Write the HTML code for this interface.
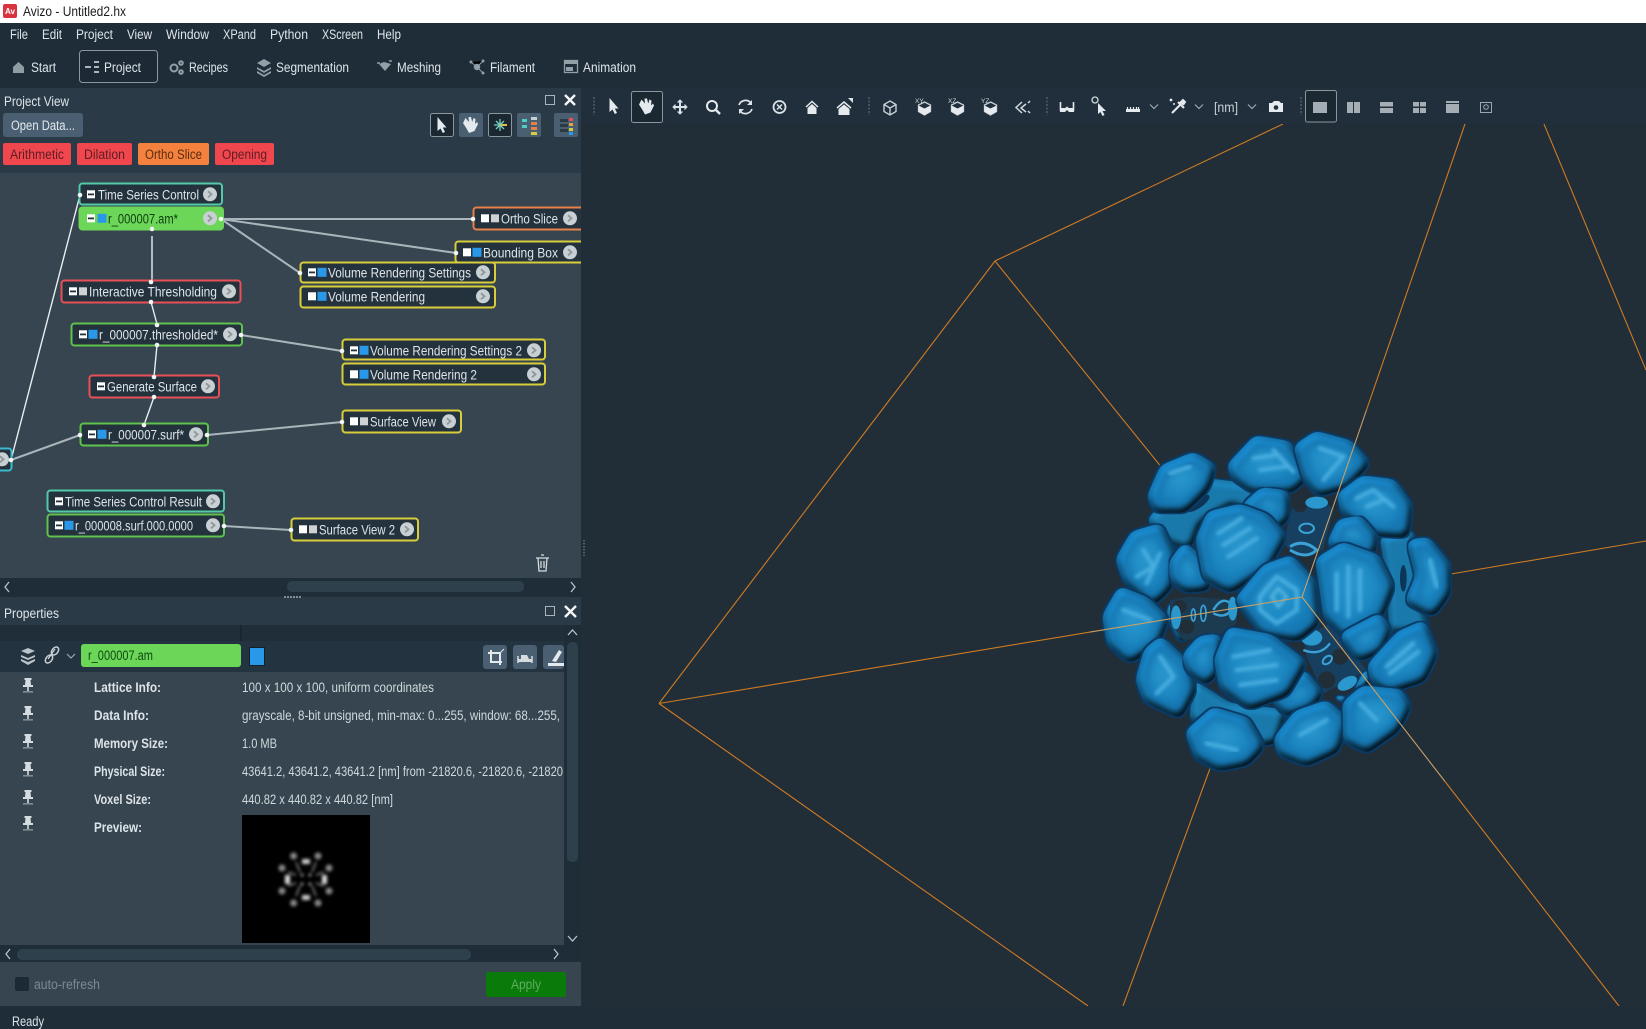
<!DOCTYPE html>
<html lang="en">
<head>
<meta charset="utf-8">
<title>Avizo - Untitled2.hx</title>
<style>
html,body{margin:0;padding:0;background:#212e38;width:1646px;height:1029px;overflow:hidden}
svg{display:block;filter:blur(.35px)}
text{font-family:"Liberation Sans",sans-serif;font-size:13.5px;fill:#dde4e9}
.b{font-weight:bold}
path[fill="url(#lg)"]{stroke:#1a90d7;stroke-width:34;stroke-linejoin:round}
.hl path{fill:none;stroke:#4aaee0;stroke-width:12;stroke-linecap:round}
</style>
</head>
<body>
<svg xmlns="http://www.w3.org/2000/svg" width="1646" height="1029" viewBox="0 0 1646 1029">
<defs>
<clipPath id="vc"><rect x="582" y="124" width="1064" height="882"/></clipPath>
<clipPath id="gc"><rect x="0" y="173" width="581" height="405"/></clipPath>
<clipPath id="pc"><rect x="0" y="640" width="564" height="305"/></clipPath>
<radialGradient id="lg" cx="48%" cy="42%" r="62%">
<stop offset="0" stop-color="#33b8fa"/><stop offset=".65" stop-color="#20a3eb"/><stop offset="1" stop-color="#168ad3"/>
</radialGradient>
<filter id="goo" x="-20%" y="-20%" width="140%" height="140%" color-interpolation-filters="sRGB">
<feGaussianBlur in="SourceGraphic" stdDeviation="12" result="b"/>
<feColorMatrix in="b" type="matrix" values="1 0 0 0 0 0 1 0 0 0 0 0 1 0 0 0 0 0 12 -5" result="g"/>
<feMorphology in="g" operator="dilate" radius="4" result="d"/>
<feFlood flood-color="#0a3a66"/>
<feComposite in2="d" operator="in" result="o"/>
<feGaussianBlur in="g" stdDeviation="11" result="h"/>
<feDiffuseLighting in="h" surfaceScale="16" diffuseConstant=".95" lighting-color="#fff" result="L"><feDistantLight azimuth="240" elevation="60"/></feDiffuseLighting>
<feComposite in="g" in2="L" operator="arithmetic" k1="1" k2="0" k3="0" k4="0" result="s"/>
<feMerge><feMergeNode in="o"/><feMergeNode in="s"/></feMerge>
</filter>
<filter id="bl" x="-30%" y="-30%" width="160%" height="160%"><feGaussianBlur stdDeviation="5"/></filter>
<filter id="bs"><feGaussianBlur stdDeviation="1.5"/></filter>
<g id="ar"><circle r="7" fill="#c9d0d3"/><path d="M-2 -3L1.5 0L-2 3" fill="none" stroke="#8d969b" stroke-width="1.8"/></g>
<g id="mn"><rect x="-4" y="-4" width="8" height="8" fill="#fff"/><rect x="-3" y="-.8" width="6" height="1.8" fill="#24323d"/></g>
<g id="wh"><rect x="-4" y="-4" width="8" height="8" fill="#fff"/></g>
<g id="gy"><rect x="-4" y="-4" width="8" height="8" fill="#cfd2d3"/></g>
<g id="bu"><rect x="-4.5" y="-4.5" width="9" height="9" fill="#2a98e8"/></g>
<g id="pin" fill="#d5dce0"><rect x="-3.5" y="-8" width="7" height="2"/><path d="M-2.5 -6H2.5L3 -1H-3Z"/><rect x="-5" y="-1" width="10" height="2"/><rect x="-.8" y="1" width="1.6" height="4"/><rect x="-5" y="5" width="10" height="1.6" fill="#7f8c95"/></g>
<path id="cur" d="M-4.5 -8V6L-1.5 3.5L.8 8L3 7L.8 2.5H4.5Z" fill="#e4eaee"/>
<path id="hand" d="M-7 -2L-4.500 -7L-1 -3L-1.500 -8L1 -8L2.200 -3L3.500 -7L5.500 -6L5 -1L7 -3L8 -1L4.500 6L-1 8L-3.500 3.500Z" fill="#e4eaee"/>
<g id="cube" fill="none" stroke="#c6d0d6" stroke-width="1.4"><path d="M0 -7L6 -3.500V3.500L0 7L-6 3.500V-3.500Z"/><path d="M0 0V7M0 0L6 -3.500M0 0L-6 -3.500"/></g>
<g id="cube2"><path d="M0 -6L6 -3V3.500L0 7L-6 3.500V-3Z" fill="none" stroke="#c6d0d6" stroke-width="1.3"/><path d="M0 .5L-6 -2.500V3.500L0 7L6 3.500V-2.500Z" fill="#e4eaee"/></g>
<path id="chev" d="M-4 -2L0 2L4 -2" fill="none" stroke="#9aa7b0" stroke-width="1.2"/>
</defs>

<!-- window title bar -->
<rect width="1646" height="23" fill="#fff"/>
<rect x="3" y="4" width="14" height="14" rx="2" fill="#d8333f"/>
<text x="5" y="14" style="font-size:8px;fill:#fff;font-weight:bold" textLength="10" lengthAdjust="spacingAndGlyphs">Av</text>
<text x="23" y="16" style="fill:#1c1c1c" textLength="103" lengthAdjust="spacingAndGlyphs">Avizo - Untitled2.hx</text>

<!-- menu + toolbar -->
<rect y="23" width="1646" height="65" fill="#1f2d39"/>
<g>
<text x="10" y="39" textLength="18" lengthAdjust="spacingAndGlyphs">File</text>
<text x="42" y="39" textLength="20" lengthAdjust="spacingAndGlyphs">Edit</text>
<text x="76" y="39" textLength="37" lengthAdjust="spacingAndGlyphs">Project</text>
<text x="127" y="39" textLength="25" lengthAdjust="spacingAndGlyphs">View</text>
<text x="166" y="39" textLength="43" lengthAdjust="spacingAndGlyphs">Window</text>
<text x="223" y="39" textLength="33" lengthAdjust="spacingAndGlyphs">XPand</text>
<text x="270" y="39" textLength="38" lengthAdjust="spacingAndGlyphs">Python</text>
<text x="322" y="39" textLength="41" lengthAdjust="spacingAndGlyphs">XScreen</text>
<text x="377" y="39" textLength="24" lengthAdjust="spacingAndGlyphs">Help</text>
</g>
<g>
<path d="M13 67L18.500 62L24 67V73H13Z" fill="#8f9ca4"/>
<text x="31" y="72" textLength="25" lengthAdjust="spacingAndGlyphs">Start</text>
<rect x="79.500" y="50.500" width="78" height="32" rx="3" fill="#1d2a35" stroke="#8b969d"/>
<path d="M85 67H91M94 62H99M94 67H99M94 72H99" stroke="#dfe5e9" stroke-width="1.6" fill="none"/>
<text x="104" y="72" textLength="37" lengthAdjust="spacingAndGlyphs">Project</text>
<g fill="none" stroke="#939fa7" stroke-width="2"><circle cx="174" cy="68" r="3.500"/><circle cx="181" cy="63" r="1.800"/><circle cx="181" cy="72" r="1.800"/></g>
<text x="189" y="72" textLength="39" lengthAdjust="spacingAndGlyphs">Recipes</text>
<path d="M257 63L264 59L271 63L264 67ZM257 67L264 71L271 67V69L264 73L257 69ZM257 71L264 75L271 71V73L264 77L257 73Z" fill="#939fa7"/>
<text x="276" y="72" textLength="73" lengthAdjust="spacingAndGlyphs">Segmentation</text>
<path d="M379 64L384 62L391 64L385 71Z" fill="#939fa7"/><path d="M377 63H380M389 61H392" stroke="#939fa7" stroke-width="1.5"/>
<text x="397" y="72" textLength="44" lengthAdjust="spacingAndGlyphs">Meshing</text>
<path d="M471 62L477 67L483 61M477 67L483 73" stroke="#939fa7"/>
<g fill="#939fa7"><circle cx="477" cy="67" r="3.200"/><circle cx="471" cy="62" r="1.500"/><circle cx="483" cy="61" r="1.500"/><circle cx="483" cy="73" r="1.500"/></g>
<text x="490" y="72" textLength="45" lengthAdjust="spacingAndGlyphs">Filament</text>
<rect x="564.500" y="60.500" width="13" height="12" fill="none" stroke="#939fa7" stroke-width="1.3"/><rect x="564" y="60" width="14" height="4" fill="#939fa7"/><rect x="566" y="67" width="7" height="4" fill="#939fa7"/>
<text x="583" y="72" textLength="53" lengthAdjust="spacingAndGlyphs">Animation</text>
</g>

<!-- viewer -->
<rect x="581" y="88" width="1065" height="37" fill="#212f3c"/>
<rect x="581" y="124" width="1065" height="882" fill="#212e38"/>
<g clip-path="url(#vc)" stroke="#cf7a22" stroke-width="1.1" fill="none">
<path d="M995 261L1283 124M995 261L659 703.500M995 261L1200 515M659 703.500L1088 1006M1212 763L1123 1006M1451 574L1646 541M1544 124L1646 370"/>
</g>

<!-- 3D surface -->
<g transform="translate(1090 410) scale(.33333)">
<g filter="url(#goo)" fill="#1f93d0">
<path d="M170 330L300 200L470 220L600 240L560 360L430 280L330 340L300 420L240 400Z"/>
<path d="M870 380L970 360L1000 600L1020 660L900 670L890 500Z"/>
<path d="M230 620L270 700L300 680L240 560Z"/>
<path d="M310 810L420 880L590 900L560 1000L480 1010L300 930Z"/>
<path d="M700 850L780 860L830 770L850 810L760 880Z"/>
</g>
<g fill="#212e38">
<ellipse cx="325" cy="280" rx="40" ry="14" transform="rotate(-35 325 280)" fill="#0c3558"/>
<ellipse cx="940" cy="505" rx="10" ry="40" fill="#0c3558"/>
<ellipse cx="420" cy="930" rx="40" ry="14" transform="rotate(15 420 930)" fill="#0c3558"/>
<path d="M610 280L700 270L730 300L700 420L620 440L580 400Z" fill="#163f60"/>
<path d="M240 570L300 560L440 570L440 640L380 680L280 690L240 640Z" fill="#1c3b50"/>
<path d="M640 680L720 640L830 780L700 850L650 740Z" fill="#163f60"/>
<circle cx="270" cy="590" r="20"/><circle cx="290" cy="650" r="22"/><circle cx="630" cy="285" r="22"/><circle cx="750" cy="740" r="24"/><circle cx="710" cy="810" r="26"/>
</g>
<g fill="none" stroke="#3aa2d6" stroke-width="9">
<ellipse cx="680" cy="278" rx="34" ry="18" fill="#2a97cd" stroke="none"/>
<path d="M600 410Q640 385 680 420Q650 450 600 420"/><ellipse cx="650" cy="355" rx="22" ry="14" stroke-width="6"/>
<ellipse cx="258" cy="622" rx="15" ry="36" fill="#2a97cd" stroke="none"/>
<ellipse cx="340" cy="610" rx="8" ry="24" stroke-width="5"/><ellipse cx="310" cy="615" rx="6" ry="18" stroke-width="5"/>
<path d="M370 600Q400 550 430 590Q410 630 370 610" stroke-width="7"/><ellipse cx="428" cy="596" rx="14" ry="36" fill="#2a97cd" stroke="none"/>
<ellipse cx="665" cy="683" rx="32" ry="24" fill="#2a97cd" stroke="none"/>
<path d="M640 720Q690 740 720 700" stroke-width="7"/><ellipse cx="712" cy="750" rx="16" ry="10" stroke-width="6" transform="rotate(-40 712 750)"/>
<ellipse cx="772" cy="820" rx="32" ry="18" transform="rotate(-30 772 820)" fill="#2a97cd" stroke="none"/>
</g>
<!-- lobes -->
<g filter="url(#goo)"><path fill="url(#lg)" d="M430 170L500 95L590 110L635 200L600 230L490 230L440 195Z"/></g>
<g class="hl" filter="url(#bl)"><path d="M490 145L560 135M510 180L590 170M550 120L610 185"/></g>
<g filter="url(#goo)"><path fill="url(#lg)" d="M630 115L680 82L775 108L820 160L760 220L690 240L655 200Z"/></g>
<g class="hl" filter="url(#bl)"><path d="M690 115L760 140L700 210"/></g>
<g filter="url(#goo)"><path fill="url(#lg)" d="M190 260L225 180L310 145L360 175L340 230L280 290L205 290Z"/></g>
<g class="hl" filter="url(#bl)"><path d="M240 190L300 170"/></g>
<g filter="url(#goo)"><path fill="url(#lg)" d="M475 290L520 250L580 258L580 320L555 340L505 300Z"/></g>
<g filter="url(#goo)"><path fill="url(#lg)" d="M95 450L135 380L205 360L240 440L230 525L190 565L115 505Z"/></g>
<g class="hl" filter="url(#bl)"><path d="M160 420L190 470L140 500M210 430L170 520"/></g>
<g filter="url(#goo)"><path fill="url(#lg)" d="M255 460L285 420L325 455L345 525L290 530L258 505Z"/></g>
<g filter="url(#goo)"><path fill="url(#lg)" d="M335 390L365 320L450 300L525 328L570 380L525 462L420 530L355 495Z"/></g>
<g class="hl" filter="url(#bl)"><path d="M385 370L455 325M400 405L480 355M415 440L500 385"/></g>
<g filter="url(#goo)"><path fill="url(#lg)" d="M760 260L820 215L905 225L950 290L940 365L860 360L768 298Z"/></g>
<g class="hl" filter="url(#bl)"><path d="M800 265L850 240L910 290M830 290L880 270"/></g>
<g filter="url(#goo)"><path fill="url(#lg)" d="M730 400L755 345L805 335L845 380L840 420L770 400Z"/></g>
<g filter="url(#goo)"><path fill="url(#lg)" d="M970 405L1010 400L1065 470L1065 545L1025 600L965 570L995 500Z"/></g>
<g class="hl" filter="url(#bl)"><path d="M1020 450L1040 530"/></g>
<g filter="url(#goo)"><path fill="url(#lg)" d="M695 455L760 415L855 450L895 530L862 612L770 665L718 615Z"/></g>
<g class="hl" filter="url(#bl)"><path d="M740 490V600M775 470V620M810 480V600"/></g>
<g filter="url(#goo)"><path fill="url(#lg)" d="M770 680L865 630L885 660L862 712L810 735Z"/></g>
<g filter="url(#goo)"><path fill="url(#lg)" d="M455 570L530 480L600 455L660 520L670 635L620 675L525 660Z"/></g>
<g class="hl" filter="url(#bl)"><path d="M510 560L560 500L620 540L620 600L560 640L510 600Z"/><path d="M545 560L565 535L590 560L565 590Z" style="stroke-width:8;stroke:#5ab8e2"/></g>
<g filter="url(#goo)"><path fill="url(#lg)" d="M55 620L95 550L165 578L218 630L192 692L120 740L68 695Z"/></g>
<g class="hl" filter="url(#bl)"><path d="M100 600L180 630"/></g>
<g filter="url(#goo)"><path fill="url(#lg)" d="M850 770L932 680L995 652L1025 730L992 800L900 830L858 805Z"/></g>
<g class="hl" filter="url(#bl)"><path d="M890 770L970 700M900 790L985 725"/></g>
<g filter="url(#goo)"><path fill="url(#lg)" d="M155 810L178 728L212 700L282 765L300 838L265 905L175 862Z"/></g>
<g class="hl" filter="url(#bl)"><path d="M210 740L250 800L200 850"/></g>
<g filter="url(#goo)"><path fill="url(#lg)" d="M295 740L335 695L378 690L372 775L348 805L305 775Z"/></g>
<g filter="url(#goo)"><path fill="url(#lg)" d="M565 868L640 800L680 850L655 880L592 900Z"/></g>
<g filter="url(#goo)"><path fill="url(#lg)" d="M390 750L425 670L538 690L630 760L582 842L480 880L405 825Z"/></g>
<g class="hl" filter="url(#bl)"><path d="M430 740L540 720M440 780L560 765M450 825L560 810"/></g>
<g filter="url(#goo)"><path fill="url(#lg)" d="M570 988L625 918L708 890L755 932L732 1012L650 1050L578 1022Z"/></g>
<g class="hl" filter="url(#bl)"><path d="M630 975L710 930"/></g>
<g filter="url(#goo)"><path fill="url(#lg)" d="M775 885L822 845L925 855L945 890L912 952L830 1010L778 985Z"/></g>
<g class="hl" filter="url(#bl)"><path d="M810 880L860 930"/></g>
<g filter="url(#goo)"><path fill="url(#lg)" d="M305 970L372 910L465 938L505 1008L465 1050L390 1065L328 1032Z"/></g>
<g class="hl" filter="url(#bl)"><path d="M350 1000L440 1020"/></g>
</g>
<!-- wireframe passing in front of the surface -->
<g clip-path="url(#vc)" fill="none" stroke-width="1.1">
<path d="M659 703.500L1090 632.100M1366.500 410L1465 124M1445 781.500L1619 1006" stroke="#cf7a22"/>
<path d="M1090 632.100L1302 597L1366.500 410M1302 597L1445 781.500" stroke="#c9a066"/>
</g>

<!-- viewer toolbar icons -->
<g>
<path d="M594 97V115M869 97V115M1047 97V115M1301 97V115" stroke="#66747e" stroke-dasharray="2 1.5"/>
<use href="#cur" x="614" y="106"/>
<rect x="631.500" y="91.500" width="31" height="31" rx="2" fill="#1b2832" stroke="#8b969d"/>
<use href="#hand" x="646" y="106.500"/>
<path d="M680 101V113M674 107H686" stroke="#dce3e8" stroke-width="2"/><path d="M677.500 102.500L680 100L682.500 102.500M677.500 111.500L680 114L682.500 111.500M675.500 104.500L673 107L675.500 109.500M684.500 104.500L687 107L684.500 109.500" fill="#dce3e8" stroke="#dce3e8"/>
<circle cx="712" cy="106" r="5" fill="none" stroke="#e4eaee" stroke-width="2"/><path d="M716 110L720 114" stroke="#e4eaee" stroke-width="2.4"/>
<path d="M739 105A7 7 0 0 1 751 103M752 109A7 7 0 0 1 740 111" fill="none" stroke="#dce3e8" stroke-width="1.7"/><path d="M752 100V105H747M739 114V109H744" fill="#dce3e8"/>
<circle cx="779.500" cy="107" r="6" fill="none" stroke="#dce3e8" stroke-width="1.8"/><path d="M777 104.500L782 109.500M782 104.500L777 109.500" stroke="#dce3e8" stroke-width="1.5"/>
<path d="M806 107L812 101.500L818 107" fill="none" stroke="#e4eaee" stroke-width="1.5"/><path d="M807.500 108L812 104L816.500 108V114H807.500Z" fill="#e4eaee"/>
<path d="M837 108L844 102L851 108" fill="none" stroke="#e4eaee" stroke-width="1.5"/><path d="M838.500 109L844 104.500L849.500 109V115H838.500Z" fill="#e4eaee"/><path d="M848 98H853V103Z" fill="#dce3e8"/>
<use href="#cube" x="890" y="108"/>
<use href="#cube2" x="924.500" y="108"/><text x="915" y="103" style="font-size:6.5px;fill:#cfd8dd">XY</text>
<use href="#cube2" x="957.500" y="108"/><text x="948" y="103" style="font-size:6.5px;fill:#cfd8dd">XZ</text>
<use href="#cube2" x="990.500" y="108"/><text x="981" y="103" style="font-size:6.5px;fill:#cfd8dd">YZ</text>
<path d="M1022 102L1016 107.500L1022 113M1026 104L1021 108L1026 112M1030 101L1028 103M1030 113L1028 111" fill="none" stroke="#cfd8dd" stroke-width="1.5"/>
<path d="M1060.500 102V110H1064L1067 107.500L1070 110H1073.500V102" fill="none" stroke="#e4eaee" stroke-width="1.6"/><path d="M1060 108H1074V112H1069L1067 110L1065 112H1060Z" fill="#e4eaee"/>
<circle cx="1095" cy="100" r="3" fill="none" stroke="#cfd8dd" stroke-width="1.3"/><path d="M1098 103V114L1100.500 112L1102.500 116L1104.500 115L1102.500 111H1106Z" fill="#e4eaee"/>
<rect x="1126" y="109" width="14" height="3" fill="#e4eaee"/><path d="M1127.500 107V109M1130.500 107V109M1133.500 107V109M1136.500 107V109M1138.500 107V109" stroke="#e4eaee" stroke-width="1.2"/>
<use href="#chev" x="1154" y="106.500"/>
<path d="M1172 113L1180 105" stroke="#e4eaee" stroke-width="2"/><path d="M1178 102L1184 108M1180 103L1183 100L1185 102L1183 105" stroke="#e4eaee" stroke-width="2" fill="#e4eaee"/><circle cx="1171" cy="100" r="1.4" fill="#e4eaee"/><circle cx="1174" cy="104" r="1" fill="#e4eaee"/>
<use href="#chev" x="1199" y="106.500"/>
<text x="1214" y="112" style="fill:#c6d0d6" textLength="24" lengthAdjust="spacingAndGlyphs">[nm]</text>
<use href="#chev" x="1252" y="106.500"/>
<path d="M1269 103H1272L1274 101H1279L1281 103H1283V112H1269Z" fill="#e4eaee"/><circle cx="1276" cy="107.500" r="2.300" fill="#212f3c"/>
<rect x="1305.500" y="90.500" width="31" height="31.500" rx="2" fill="#1b2832" stroke="#8b969d"/>
<rect x="1313" y="102" width="14" height="11" fill="#a5aeb4"/>
<rect x="1347" y="102" width="6" height="11" fill="#a5aeb4"/><rect x="1354" y="102" width="6" height="11" fill="#a5aeb4"/>
<rect x="1380" y="102" width="13" height="4.500" fill="#a5aeb4"/><rect x="1380" y="108" width="13" height="5" fill="#a5aeb4"/>
<rect x="1413" y="102" width="6" height="4.500" fill="#a5aeb4"/><rect x="1420" y="102" width="6" height="4.500" fill="#a5aeb4"/><rect x="1413" y="108" width="6" height="5" fill="#a5aeb4"/><rect x="1420" y="108" width="6" height="5" fill="#a5aeb4"/>
<rect x="1446" y="101" width="13" height="2" fill="#a5aeb4"/><rect x="1446" y="104" width="13" height="9" fill="#a5aeb4"/>
<rect x="1480.500" y="102.500" width="11" height="10" fill="none" stroke="#9aa7b0"/><circle cx="1486" cy="107" r="2.300" fill="none" stroke="#9aa7b0"/>
</g>
<path d="M584 540V556" stroke="#66747e" stroke-width="1.5" stroke-dasharray="1.5 1.5"/>

<!-- left column -->
<rect x="0" y="88" width="581" height="918" fill="#2a3a47"/>
<text x="4" y="106" textLength="65" lengthAdjust="spacingAndGlyphs">Project View</text>
<rect x="545.500" y="95.500" width="9" height="9" fill="none" stroke="#aab4ba"/>
<path d="M565 95L575 105M575 95L565 105" stroke="#f4f6f7" stroke-width="2.4"/>
<rect x="3" y="113" width="80" height="24" rx="3" fill="#4a6072"/>
<text x="11" y="130" style="fill:#e3e9ec" textLength="64" lengthAdjust="spacingAndGlyphs">Open Data...</text>
<rect x="430.500" y="113.500" width="23" height="23" rx="2" fill="#1b2832" stroke="#8b969d"/>
<use href="#cur" x="442" y="125"/>
<rect x="459" y="113" width="24" height="24" rx="2" fill="#4a6072"/>
<use href="#hand" x="470" y="125"/>
<rect x="488.500" y="113.500" width="23" height="23" rx="2" fill="#1b2832" stroke="#8b969d"/>
<path d="M494 125H506M500 119V131M496 121L504 129M504 121L496 129" stroke="#76d0c0" stroke-width="1.3"/><path d="M501 125H507" stroke="#e0c040" stroke-width="2"/>
<rect x="517" y="113" width="24" height="24" rx="2" fill="#4a6072"/>
<rect x="522" y="119" width="5" height="3" fill="#4dd0c0"/><rect x="522" y="125" width="5" height="3" fill="#4dd0c0"/><rect x="531" y="117" width="6" height="3" fill="#c8d0d5"/><rect x="531" y="122" width="6" height="3" fill="#e8804a"/><rect x="531" y="127" width="6" height="3" fill="#e8804a"/><rect x="531" y="132" width="6" height="3" fill="#d8cd3a"/>
<rect x="554" y="113" width="24" height="24" rx="2" fill="#4a6072"/>
<rect x="560" y="119" width="8" height="3" fill="#2a3a47"/><rect x="560" y="124" width="8" height="3" fill="#2a3a47"/><rect x="560" y="129" width="8" height="3" fill="#2a3a47"/><rect x="569" y="118" width="4" height="3" fill="#e85058"/><rect x="569" y="123" width="4" height="3" fill="#e8a040"/><rect x="569" y="128" width="4" height="3" fill="#d8cd3a"/><rect x="569" y="132" width="4" height="3" fill="#2a98e8"/>

<rect x="3" y="143" width="68" height="22" rx="2" fill="#f0474f"/>
<text x="10" y="159" style="fill:#5f1c22" textLength="54" lengthAdjust="spacingAndGlyphs">Arithmetic</text>
<rect x="77" y="143" width="55" height="22" rx="2" fill="#f0474f"/>
<text x="84" y="159" style="fill:#5f1c22" textLength="41" lengthAdjust="spacingAndGlyphs">Dilation</text>
<rect x="138" y="143" width="71" height="22" rx="2" fill="#f4813e"/>
<text x="145" y="159" style="fill:#5a2c10" textLength="57" lengthAdjust="spacingAndGlyphs">Ortho Slice</text>
<rect x="215" y="143" width="59" height="22" rx="2" fill="#f0474f"/>
<text x="222" y="159" style="fill:#5f1c22" textLength="45" lengthAdjust="spacingAndGlyphs">Opening</text>

<!-- project graph -->
<rect x="0" y="173" width="581" height="405" fill="#36454f"/>
<g clip-path="url(#gc)">
<g stroke="#a9b5bb" stroke-width="2" fill="none">
<path d="M11 460L80 435M221 219H473M221 219L456 253M221 219L300 273M241 335L342 351M207 435L342 422M224 526L291 530"/>
</g>
<g stroke="#e8eef1" stroke-width="1.4" fill="none">
<path d="M11 460L80 195M152 236V283M151 302L157 324M157 345L154 377M154 397L144 425"/>
</g>
<g fill="#24323d" stroke-width="2" transform="translate(-.5 -.5)">
<rect x="-20" y="449" width="32" height="22" rx="3" stroke="#3ab9cf"/>
<rect x="80" y="184" width="142.500" height="21" rx="3" stroke="#52c9a8"/>
<rect x="80" y="208" width="143.500" height="22" rx="3" stroke="#6cd658" fill="#6cd658"/>
<rect x="474" y="208" width="130" height="22" rx="3" stroke="#e8804a"/>
<rect x="456" y="242" width="140" height="21" rx="3" stroke="#d8cd3a"/>
<rect x="301" y="263" width="194.500" height="20" rx="3" stroke="#d8cd3a"/>
<rect x="301" y="287" width="194.500" height="21" rx="3" stroke="#d8cd3a"/>
<rect x="62" y="281" width="179" height="22" rx="3" stroke="#e85058"/>
<rect x="72" y="324" width="170.500" height="22" rx="3" stroke="#5fc24d"/>
<rect x="343" y="340" width="202.500" height="20" rx="3" stroke="#d8cd3a"/>
<rect x="343" y="364" width="202.500" height="21" rx="3" stroke="#d8cd3a"/>
<rect x="90" y="376" width="129.500" height="22" rx="3" stroke="#e85058"/>
<rect x="81" y="424" width="127.500" height="22" rx="3" stroke="#5fc24d"/>
<rect x="343" y="411" width="118.500" height="22" rx="3" stroke="#d8cd3a"/>
<rect x="48" y="491" width="176.500" height="21" rx="3" stroke="#52c9a8"/>
<rect x="48" y="515" width="176.500" height="22" rx="3" stroke="#5fc24d"/>
<rect x="292" y="519" width="126.500" height="22" rx="3" stroke="#d8cd3a"/>
</g>
<g transform="translate(0 -.7)">
<use href="#ar" x="2" y="460"/>
<use href="#mn" x="91" y="195"/><text x="98" y="200" textLength="101" lengthAdjust="spacingAndGlyphs">Time Series Control</text><use href="#ar" x="210" y="195"/>
<use href="#mn" x="91" y="219"/><use href="#bu" x="102" y="219"/><text x="108" y="224" style="fill:#0f3d10" textLength="70" lengthAdjust="spacingAndGlyphs">r_000007.am*</text><use href="#ar" x="210" y="219"/>
<use href="#wh" x="485" y="219"/><use href="#gy" x="495" y="219"/><text x="501" y="224" textLength="57" lengthAdjust="spacingAndGlyphs">Ortho Slice</text><use href="#ar" x="570" y="219"/>
<use href="#wh" x="467" y="253"/><use href="#bu" x="477" y="253"/><text x="483" y="258" textLength="75" lengthAdjust="spacingAndGlyphs">Bounding Box</text><use href="#ar" x="570" y="253"/>
<use href="#mn" x="312" y="273"/><use href="#bu" x="322" y="273"/><text x="328" y="278" textLength="143" lengthAdjust="spacingAndGlyphs">Volume Rendering Settings</text><use href="#ar" x="483" y="273"/>
<use href="#wh" x="312" y="297"/><use href="#bu" x="322" y="297"/><text x="328" y="302" textLength="97" lengthAdjust="spacingAndGlyphs">Volume Rendering</text><use href="#ar" x="483" y="297"/>
<use href="#mn" x="73" y="292"/><use href="#gy" x="83" y="292"/><text x="89" y="297" textLength="128" lengthAdjust="spacingAndGlyphs">Interactive Thresholding</text><use href="#ar" x="229" y="292"/>
<use href="#mn" x="83" y="335"/><use href="#bu" x="93" y="335"/><text x="99" y="340" textLength="119" lengthAdjust="spacingAndGlyphs">r_000007.thresholded*</text><use href="#ar" x="230" y="335"/>
<use href="#mn" x="354" y="351"/><use href="#bu" x="364" y="351"/><text x="370" y="356" textLength="152" lengthAdjust="spacingAndGlyphs">Volume Rendering Settings 2</text><use href="#ar" x="534" y="351"/>
<use href="#wh" x="354" y="375"/><use href="#bu" x="364" y="375"/><text x="370" y="380" textLength="107" lengthAdjust="spacingAndGlyphs">Volume Rendering 2</text><use href="#ar" x="534" y="375"/>
<use href="#mn" x="101" y="387"/><text x="107" y="392" textLength="90" lengthAdjust="spacingAndGlyphs">Generate Surface</text><use href="#ar" x="208" y="387"/>
<use href="#mn" x="92" y="435"/><use href="#bu" x="102" y="435"/><text x="108" y="440" textLength="76" lengthAdjust="spacingAndGlyphs">r_000007.surf*</text><use href="#ar" x="196" y="435"/>
<use href="#wh" x="354" y="422"/><use href="#gy" x="364" y="422"/><text x="370" y="427" textLength="66" lengthAdjust="spacingAndGlyphs">Surface View</text><use href="#ar" x="449" y="422"/>
<use href="#mn" x="59" y="502"/><text x="65" y="507" textLength="137" lengthAdjust="spacingAndGlyphs">Time Series Control Result</text><use href="#ar" x="213" y="502"/>
<use href="#mn" x="59" y="526"/><use href="#bu" x="69" y="526"/><text x="75" y="531" textLength="118" lengthAdjust="spacingAndGlyphs">r_000008.surf.000.0000</text><use href="#ar" x="213" y="526"/>
<use href="#wh" x="303" y="530"/><use href="#gy" x="313" y="530"/><text x="319" y="535" textLength="76" lengthAdjust="spacingAndGlyphs">Surface View 2</text><use href="#ar" x="407" y="530"/>
</g>
<g fill="#f2f5f6">
<circle cx="11" cy="460" r="2.3"/><circle cx="80" cy="195" r="2.3"/><circle cx="80" cy="435" r="2.3"/><circle cx="221" cy="219" r="2.3"/><circle cx="473" cy="219" r="2.3"/><circle cx="456" cy="253" r="2.3"/><circle cx="300" cy="273" r="2.3"/><circle cx="152" cy="229" r="2.3"/><circle cx="151" cy="282" r="2.3"/><circle cx="151" cy="302" r="2.3"/><circle cx="157" cy="325" r="2.3"/><circle cx="157" cy="345" r="2.3"/><circle cx="154" cy="377" r="2.3"/><circle cx="154" cy="397" r="2.3"/><circle cx="144" cy="425" r="2.3"/><circle cx="241" cy="335" r="2.3"/><circle cx="342" cy="351" r="2.3"/><circle cx="207" cy="435" r="2.3"/><circle cx="342" cy="422" r="2.3"/><circle cx="224" cy="526" r="2.3"/><circle cx="291" cy="530" r="2.3"/>
</g>
<path d="M536 558H549M538 558L539 571H546L547 558M541 555H544M541 561V568M544 561V568" fill="none" stroke="#d5dce0" stroke-width="1.3"/>
</g>

<!-- graph scrollbar -->
<rect y="578" width="581" height="19" fill="#1f2d39"/>
<rect x="287" y="581" width="237" height="11" rx="5" fill="#2f404d"/>
<path d="M9 582L5 587L9 592M571 582L575 587L571 592" fill="none" stroke="#b8c2c8" stroke-width="1.3"/>
<path d="M284 597H301" stroke="#7f8c95" stroke-dasharray="2 1" stroke-width="2"/>

<!-- properties -->
<text x="4" y="618" textLength="55" lengthAdjust="spacingAndGlyphs">Properties</text>
<rect x="545.500" y="606.500" width="9" height="9" fill="none" stroke="#aab4ba"/>
<path d="M565 606L576 617M576 606L565 617" stroke="#f4f6f7" stroke-width="2.4"/>
<rect y="625" width="564" height="16" fill="#202e3a"/>
<path d="M241 625V641" stroke="#121c24"/>
<rect y="641" width="564" height="31" fill="#243340"/>
<g fill="#b9c3c9"><path d="M21 651L28 648L35 651L28 654ZM21 655L28 658L35 655V657L28 660L21 657ZM21 659L28 662L35 659V661L28 665L21 661Z"/></g>
<path d="M48 659L55 649" stroke="#c8d1d6" stroke-width="1.3"/><ellipse cx="55" cy="651" rx="3" ry="4.500" transform="rotate(38 55 651)" fill="none" stroke="#c8d1d6" stroke-width="1.5"/><ellipse cx="49" cy="659" rx="3" ry="4.500" transform="rotate(38 49 659)" fill="none" stroke="#c8d1d6" stroke-width="1.5"/>
<use href="#chev" x="71" y="656"/>
<rect x="81" y="644" width="160" height="23" rx="3" fill="#6cd658"/>
<text x="88" y="660" style="fill:#0f4a12" textLength="65" lengthAdjust="spacingAndGlyphs">r_000007.am</text>
<rect x="249.500" y="647.500" width="15" height="18" fill="#2a98e8" stroke="#12202c"/>
<rect x="483" y="645" width="24" height="24" rx="3" fill="#4a6072"/>
<path d="M491 650V662H502M488 653H500V665" fill="none" stroke="#e4eaee" stroke-width="2"/><path d="M500 653L504 649" stroke="#e4eaee"/>
<rect x="513" y="645" width="24" height="24" rx="3" fill="#4a6072"/>
<path d="M518 656V663M532 656V663" stroke="#d5dce0" stroke-width="1.5"/><path d="M518 659H532V662H518ZM521 659V655H527L529 659Z" fill="#d5dce0"/>
<rect x="543" y="645" width="21" height="24" rx="3" fill="#4a6072"/>
<path d="M548 663H564V666H548Z" fill="#e4eaee"/><path d="M552 661L559 650L562 652L556 662Z" fill="#e4eaee"/>

<rect y="672" width="564" height="273" fill="#36454f"/>
<g clip-path="url(#pc)">
<use href="#pin" x="28" y="686"/><use href="#pin" x="28" y="714"/><use href="#pin" x="28" y="742"/><use href="#pin" x="28" y="770"/><use href="#pin" x="28" y="798"/><use href="#pin" x="28" y="824"/>
<text class="b" x="94" y="692" textLength="67" lengthAdjust="spacingAndGlyphs">Lattice Info:</text>
<text class="b" x="94" y="720" textLength="55" lengthAdjust="spacingAndGlyphs">Data Info:</text>
<text class="b" x="94" y="748" textLength="74" lengthAdjust="spacingAndGlyphs">Memory Size:</text>
<text class="b" x="94" y="776" textLength="71" lengthAdjust="spacingAndGlyphs">Physical Size:</text>
<text class="b" x="94" y="804" textLength="57" lengthAdjust="spacingAndGlyphs">Voxel Size:</text>
<text class="b" x="94" y="832" textLength="48" lengthAdjust="spacingAndGlyphs">Preview:</text>
<text x="242" y="692" style="fill:#cfd8dd" textLength="192" lengthAdjust="spacingAndGlyphs">100 x 100 x 100, uniform coordinates</text>
<text x="242" y="720" style="fill:#cfd8dd" textLength="318" lengthAdjust="spacingAndGlyphs">grayscale, 8-bit unsigned, min-max: 0...255, window: 68...255,</text>
<text x="242" y="748" style="fill:#cfd8dd" textLength="35" lengthAdjust="spacingAndGlyphs">1.0 MB</text>
<text x="242" y="776" style="fill:#cfd8dd" textLength="321" lengthAdjust="spacingAndGlyphs">43641.2, 43641.2, 43641.2 [nm] from -21820.6, -21820.6, -21820</text>
<text x="242" y="804" style="fill:#cfd8dd" textLength="151" lengthAdjust="spacingAndGlyphs">440.82 x 440.82 x 440.82 [nm]</text>
<rect x="242" y="815" width="128" height="128" fill="#000"/>
<g fill="#8a8a8a" filter="url(#bs)">
<circle cx="293.600" cy="856" r="3.5"/><circle cx="318" cy="856" r="3.5"/><circle cx="282" cy="868" r="3.5"/><circle cx="329" cy="868" r="3.5"/><circle cx="282" cy="891" r="3.5"/><circle cx="329" cy="891" r="3.5"/><circle cx="293.600" cy="903" r="3.5"/><circle cx="318" cy="903" r="3.5"/>
<rect x="302" y="859" width="8" height="5" fill="#cfcfcf"/><rect x="302" y="895" width="8" height="5" fill="#cfcfcf"/><rect x="285" y="875" width="5" height="9" fill="#dedede"/><rect x="322" y="875" width="5" height="9" fill="#dedede"/>
<path d="M296 862L300 872M316 862L312 872M296 896L300 886M316 896L312 886M288 872L296 875M324 872L316 875M288 886L296 883M324 886L316 883" stroke="#888" stroke-width="1.6"/>
<circle cx="302" cy="875" r="1.2" fill="#fff"/><circle cx="310" cy="875" r="1.2" fill="#fff"/><circle cx="302" cy="884" r="1.2" fill="#fff"/><circle cx="310" cy="884" r="1.2" fill="#fff"/>
</g>
</g>

<!-- properties scrollbars -->
<rect x="564" y="625" width="17" height="337" fill="#1f2d39"/>
<rect x="567" y="642" width="11" height="220" rx="5" fill="#2f404d"/>
<path d="M568 635L572.500 630L577 635M568 936L572.500 941L577 936" fill="none" stroke="#b8c2c8" stroke-width="1.3"/>
<rect y="945" width="564" height="17" fill="#1f2d39"/>
<rect x="17" y="949" width="454" height="11" rx="5" fill="#2f404d"/>
<path d="M10 949L6 954L10 959M554 949L558 954L554 959" fill="none" stroke="#b8c2c8" stroke-width="1.3"/>

<!-- apply area -->
<rect y="962" width="581" height="44" fill="#36454f"/>
<rect x="15" y="977" width="14" height="14" rx="2" fill="#1c2a35"/>
<text x="34" y="989" style="fill:#7c8a94" textLength="66" lengthAdjust="spacingAndGlyphs">auto-refresh</text>
<rect x="486" y="972" width="80" height="25" rx="2" fill="#0a7a0a"/>
<text x="511" y="989" style="fill:#5fae5f" textLength="30" lengthAdjust="spacingAndGlyphs">Apply</text>

<!-- status bar -->
<rect y="1006" width="1646" height="23" fill="#1f2d39"/>
<text x="12" y="1026" textLength="32" lengthAdjust="spacingAndGlyphs">Ready</text>
</svg>
</body>
</html>
